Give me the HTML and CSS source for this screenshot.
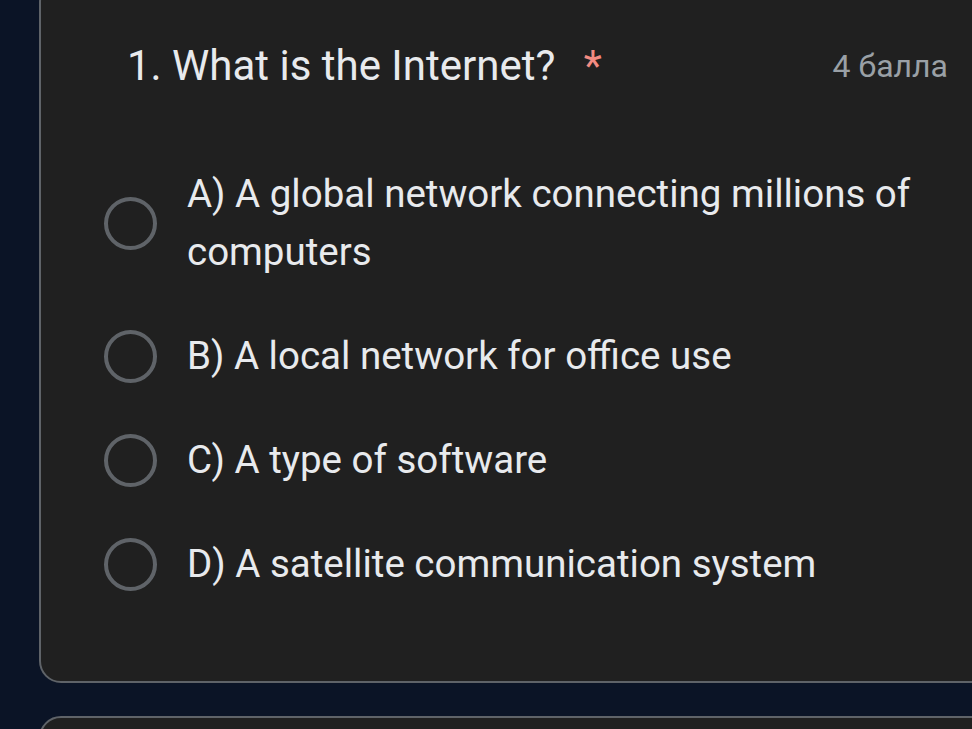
FILE: index.html
```html
<!DOCTYPE html>
<html lang="ru">

<head>
  <meta charset="utf-8">
  <title>Тест</title>
  <link rel="stylesheet" href="styles.css">
</head>

<body>
<div class="card">
  <div class="question">
    <div class="title">1. What is the Internet? <span class="required">*</span></div>
    <div class="points">4 балла</div>
  </div>

  <div class="options">
    <div class="option">
      <span class="radio"></span>
      <span class="label">A) A global network connecting millions of computers</span>
    </div>
    <div class="option">
      <span class="radio"></span>
      <span class="label">B) A local network for office use</span>
    </div>
    <div class="option">
      <span class="radio"></span>
      <span class="label">C) A type of software</span>
    </div>
    <div class="option">
      <span class="radio"></span>
      <span class="label">D) A satellite communication system</span>
    </div>
  </div>
</div>

<div class="card next"></div>
</body>

</html>
```

FILE: styles.css
```css
html, body { margin: 0; padding: 0; overflow: hidden }
body { background: #0b1426; font-family: Roboto, "Noto Sans", sans-serif; color: #e8eaed; height: 729px }

.card {
  background: #202020;
  border: 2px solid #5f6368;
  border-radius: 22px;
  margin: -20px -40px 0 39px;
  padding: 56px 62px 65px 0;
}

.card.next { margin-top: 33px; height: 200px; padding: 0 }

/* Question header */

.question {
  display: flex;
  justify-content: space-between;
  align-items: center;
  padding-left: 86px;
  height: 56px;
}

.title { font-size: 42px; line-height: 56px }
.required { color: #f28b82; margin-left: 18px }
.points { font-size: 32px; color: #9aa0a6; line-height: 56px }

/* Options */

.options { margin-top: 48px }

.option {
  display: flex;
  align-items: center;
  padding: 23px 0 23px 63px;
}

.radio {
  flex: none;
  width: 45px;
  height: 45px;
  border: 4.5px solid #5f6368;
  border-radius: 50%;
  margin-right: 30px;
}

.label { font-size: 38.5px; line-height: 58px }
```
